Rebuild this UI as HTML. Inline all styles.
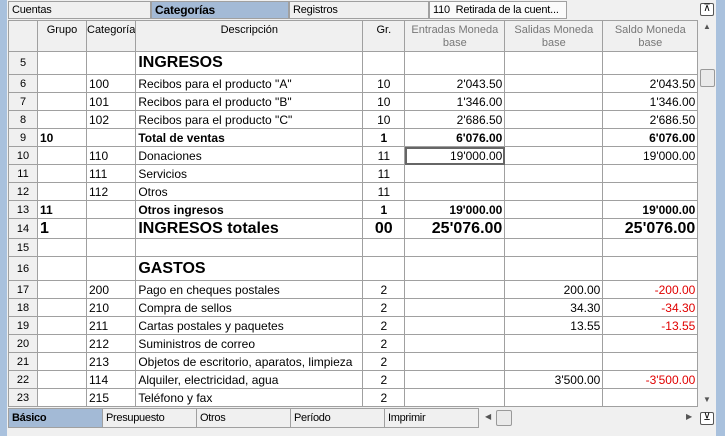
<!DOCTYPE html><html><head><meta charset="utf-8"><style>
*{margin:0;padding:0;box-sizing:border-box}
body{width:725px;height:436px;overflow:hidden;background:#f0f0f0;font-family:"Liberation Sans",Arial,sans-serif;font-size:12px;position:relative;color:#000}
.a{position:absolute}
.tab{position:absolute;top:1px;height:18px;border:1px solid #a0a0a0;background:#f0f0f0;font-size:11px;line-height:16px;padding-left:3px;letter-spacing:-0.2px}
.btab{position:absolute;top:408px;height:20px;border:1px solid #a0a0a0;background:#f0f0f0;font-size:11px;line-height:18px;padding-left:3px;letter-spacing:-0.3px}
table{position:absolute;left:8px;top:20px;border-collapse:collapse;table-layout:fixed;background:#fff}
td{border:1px solid #a0a0a0;height:18px;padding:0 2px;white-space:nowrap;overflow:hidden;font-size:12px;line-height:16px}
td.n{background:#f0f0f0;text-align:center;font-size:11px}
th{border:1px solid #a0a0a0;background:#f0f0f0;font-weight:normal;font-size:11px;vertical-align:top;line-height:13px;padding-top:3px;height:31px;overflow:hidden;white-space:nowrap}
.r{text-align:right}.c{text-align:center}.b{font-weight:bold}.big{font-weight:bold;font-size:16px}
.red{color:#e00000}
</style></head><body>
<div class="a" style="left:0;top:0;width:7px;height:436px;background:#a9c1dd"></div>
<div class="a" style="left:716px;top:0;width:9px;height:436px;background:#a9c1dd"></div>
<div class="tab" style="left:8px;width:143px">Cuentas</div>
<div class="tab" style="left:151px;width:138px;background:#a3bad6;font-weight:bold;font-size:12px">Categorías</div>
<div class="tab" style="left:289px;width:140px">Registros</div>
<div class="tab" style="left:429px;width:138px;background:#fafafa">110&nbsp; Retirada de la cuent...</div>
<div class="a" style="left:700px;top:3px;width:14px;height:13px;border:1px solid #555;border-radius:2px;font-size:10px;line-height:10px;text-align:center;background:#fff">⊼</div>
<table>
<colgroup><col style="width:29px"><col style="width:49px"><col style="width:48px"><col style="width:227px"><col style="width:42px"><col style="width:100px"><col style="width:98px"><col style="width:95px"></colgroup>
<tr><th></th><th>Grupo</th><th style="text-align:left">Categoría</th><th>Descripción</th><th>Gr.</th><th style="color:#777">Entradas Moneda<br>base</th><th style="color:#777">Salidas Moneda<br>base</th><th style="color:#777">Saldo Moneda<br>base</th></tr>
<tr style="height:23px"><td class="n">5</td><td></td><td></td><td class="big">INGRESOS</td><td></td><td></td><td></td><td></td></tr>
<tr><td class="n">6</td><td></td><td>100</td><td>Recibos para el producto "A"</td><td class="c">10</td><td class="r">2'043.50</td><td></td><td class="r">2'043.50</td></tr>
<tr><td class="n">7</td><td></td><td>101</td><td>Recibos para el producto "B"</td><td class="c">10</td><td class="r">1'346.00</td><td></td><td class="r">1'346.00</td></tr>
<tr><td class="n">8</td><td></td><td>102</td><td>Recibos para el producto "C"</td><td class="c">10</td><td class="r">2'686.50</td><td></td><td class="r">2'686.50</td></tr>
<tr><td class="n">9</td><td class="b">10</td><td></td><td class="b">Total de ventas</td><td class="c b">1</td><td class="r b">6'076.00</td><td></td><td class="r b">6'076.00</td></tr>
<tr><td class="n">10</td><td></td><td>110</td><td>Donaciones</td><td class="c">11</td><td class="r" style="outline:2px solid #666;outline-offset:-2px">19'000.00</td><td></td><td class="r">19'000.00</td></tr>
<tr><td class="n">11</td><td></td><td>111</td><td>Servicios</td><td class="c">11</td><td></td><td></td><td></td></tr>
<tr><td class="n">12</td><td></td><td>112</td><td>Otros</td><td class="c">11</td><td></td><td></td><td></td></tr>
<tr><td class="n">13</td><td class="b">11</td><td></td><td class="b">Otros ingresos</td><td class="c b">1</td><td class="r b">19'000.00</td><td></td><td class="r b">19'000.00</td></tr>
<tr style="height:20px"><td class="n">14</td><td class="big">1</td><td></td><td class="big">INGRESOS totales</td><td class="c big">00</td><td class="r big">25'076.00</td><td></td><td class="r big">25'076.00</td></tr>
<tr><td class="n">15</td><td></td><td></td><td></td><td></td><td></td><td></td><td></td></tr>
<tr style="height:24px"><td class="n">16</td><td></td><td></td><td class="big">GASTOS</td><td></td><td></td><td></td><td></td></tr>
<tr><td class="n">17</td><td></td><td>200</td><td>Pago en cheques postales</td><td class="c">2</td><td></td><td class="r">200.00</td><td class="r red">-200.00</td></tr>
<tr><td class="n">18</td><td></td><td>210</td><td>Compra de sellos</td><td class="c">2</td><td></td><td class="r">34.30</td><td class="r red">-34.30</td></tr>
<tr><td class="n">19</td><td></td><td>211</td><td>Cartas postales y paquetes</td><td class="c">2</td><td></td><td class="r">13.55</td><td class="r red">-13.55</td></tr>
<tr><td class="n">20</td><td></td><td>212</td><td>Suministros de correo</td><td class="c">2</td><td></td><td></td><td></td></tr>
<tr><td class="n">21</td><td></td><td>213</td><td>Objetos de escritorio, aparatos, limpieza</td><td class="c">2</td><td></td><td></td><td></td></tr>
<tr><td class="n">22</td><td></td><td>114</td><td>Alquiler, electricidad, agua</td><td class="c">2</td><td></td><td class="r">3'500.00</td><td class="r red">-3'500.00</td></tr>
<tr><td class="n">23</td><td></td><td>215</td><td>Teléfono y fax</td><td class="c">2</td><td></td><td></td><td></td></tr>
</table>
<div class="a" style="left:698px;top:20px;width:18px;height:388px;background:#f0f0f0"></div>
<div class="a" style="left:703px;top:22px;font-size:8px;color:#555">▲</div>
<div class="a" style="left:703px;top:395px;font-size:8px;color:#555">▼</div>
<div class="a" style="left:700px;top:69px;width:15px;height:18px;border:1px solid #999;border-radius:2px;background:#eaeaea"></div>
<div class="btab" style="left:8px;width:95px;background:#a3bad6;font-weight:bold">Básico</div>
<div class="btab" style="left:102px;width:95px">Presupuesto</div>
<div class="btab" style="left:196px;width:95px">Otros</div>
<div class="btab" style="left:290px;width:95px">Período</div>
<div class="btab" style="left:384px;width:95px">Imprimir</div>
<div class="a" style="left:480px;top:409px;width:218px;height:18px;background:#f0f0f0"></div>
<div class="a" style="left:485px;top:412px;font-size:8px;color:#555">◀</div>
<div class="a" style="left:686px;top:412px;font-size:8px;color:#555">▶</div>
<div class="a" style="left:496px;top:410px;width:16px;height:16px;border:1px solid #999;border-radius:2px;background:#eaeaea"></div>
<div class="a" style="left:700px;top:412px;width:14px;height:13px;border:1px solid #555;border-radius:2px;font-size:10px;line-height:10px;text-align:center;background:#fff">⊻</div>
</body></html>
